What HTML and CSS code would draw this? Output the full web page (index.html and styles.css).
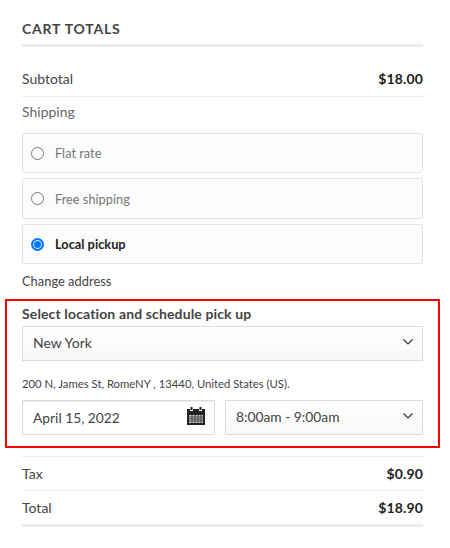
FILE: index.html
```html
<!DOCTYPE html>
<html lang="en">
<head>
    <meta charset="UTF-8">
    <title>Cart Totals</title>
    <link rel="stylesheet" href="styles.css">
</head>
<body>
    <div class="cart-totals">
        <h2 class="title">CART TOTALS</h2>

        <div class="row subtotal">
            <span>Subtotal</span>
            <span class="amount">$18.00</span>
        </div>

        <div class="shipping-label">Shipping</div>

        <div class="methods">
            <div class="method">
                <span class="radio"></span>
                <span>Flat rate</span>
            </div>
            <div class="method">
                <span class="radio"></span>
                <span>Free shipping</span>
            </div>
            <div class="method selected">
                <span class="radio"></span>
                <span>Local pickup</span>
            </div>
        </div>

        <div class="change-address">Change address</div>

        <div class="pickup">
            <div class="pickup-label">Select location and schedule pick up</div>
            <div class="field location">
                <span>New York</span>
                <svg class="chevron" viewBox="0 0 10 6" width="10" height="6"><path d="M.5 .5L5 5 9.500 .5" fill="none" stroke="#333" stroke-width="1.2"/></svg>
            </div>
            <div class="address">200 N, James St, RomeNY , 13440, United States (US).</div>
            <div class="schedule">
                <div class="field date">
                    <span class="date-value">April 15, 2022</span>
                    <svg class="calendar" viewBox="0 0 18 18" width="18" height="18">
                        <path d="M0 2h3v2h3V2h6v2h3V2h3v16H0z" fill="#222"/>
                        <path d="M3.500 0h2v3h-2zM12.500 0h2v3h-2z" fill="#222"/>
                        <path d="M2 8h14v8H2z" fill="#ccc"/>
                        <path d="M2 10h14M2 12h14M2 14h14M5 8v8M8 8v8M11 8v8M14 8v8" stroke="#444" stroke-width="1"/>
                    </svg>
                </div>
                <div class="field time">
                    <span>8:00am - 9:00am</span>
                    <svg class="chevron" viewBox="0 0 10 6" width="10" height="6"><path d="M.5 .5L5 5 9.500 .5" fill="none" stroke="#333" stroke-width="1.2"/></svg>
                </div>
            </div>
        </div>

        <div class="row tax">
            <span>Tax</span>
            <span class="amount">$0.90</span>
        </div>
        <div class="row total">
            <span>Total</span>
            <span class="amount">$18.90</span>
        </div>
    </div>
</body>
</html>
```

FILE: styles.css
```css
* {
    margin: 0;
    padding: 0;
    box-sizing: border-box;
}

body {
    font-family: Lato, sans-serif;
    font-size: 14px;
    background: #fff;
    color: #444;
}

.cart-totals {
    width: 401px;
    margin-left: 22px;
    padding-top: 20px;
}

.title {
    height: 27px;
    border-bottom: 3px solid #ececec;
    font-size: 14px;
    line-height: 18px;
    font-weight: 700;
    letter-spacing: 0.8px;
    color: #444;
}

.row {
    display: flex;
    justify-content: space-between;
    align-items: center;
    border-bottom: 1px solid #ececec;
}

.amount {
    font-weight: 700;
    letter-spacing: 0.15px;
    color: #222;
}

.subtotal {
    height: 50px;
    padding-top: 13px;
}

.shipping-label {
    height: 36px;
    line-height: 29px;
    color: #666;
}

.methods {
    display: flex;
    flex-direction: column;
    gap: 5.3px;
}

.method {
    display: flex;
    align-items: center;
    gap: 11px;
    height: 40.2px;
    padding-left: 8px;
    background: #fcfcfc;
    border: 1px solid #e2e2e2;
    border-radius: 3px;
    font-size: 12.8px;
    color: #777;
}

.radio {
    width: 13px;
    height: 13px;
    border: 1px solid #777;
    border-radius: 50%;
    background: #fff;
}

.selected {
    font-weight: 700;
    color: #222;
}

.selected .radio {
    border: 2px solid #0075ff;
    box-shadow: inset 0 0 0 1px #fff;
    background: #0075ff;
}

.change-address {
    height: 34.8px;
    line-height: 34px;
    font-size: 12.9px;
}

.pickup {
    margin: 0 -17px;
    height: 149px;
    padding: 5px 15px 0;
    border: 2px solid #f00;
}

.pickup-label {
    height: 20px;
    line-height: 15px;
    font-weight: 700;
    letter-spacing: 0.13px;
}

.field {
    display: flex;
    justify-content: space-between;
    align-items: center;
    height: 35px;
    padding: 0 9px 2px 10px;
    background: linear-gradient(#fff, #f8f8f8);
    border: 1px solid #dcdcdc;
    font-size: 14px;
    color: #444;
}

.address {
    height: 39px;
    line-height: 46px;
    font-size: 11.3px;
}

.schedule {
    display: flex;
    gap: 10px;
}

.date {
    width: 193px;
    background: #fff;
    box-shadow: inset 0 1px 2px rgba(0, 0, 0, 0.08);
    font-size: 13.8px;
}

.date-value {
    padding-top: 2px;
}

.time {
    flex: 1;
    font-size: 13.8px;
}

.tax {
    height: 35px;
    margin-top: 8px;
    border-top: 1px solid #ececec;
}

.total {
    height: 36px;
    border-bottom: 3px solid #ececec;
}
```
